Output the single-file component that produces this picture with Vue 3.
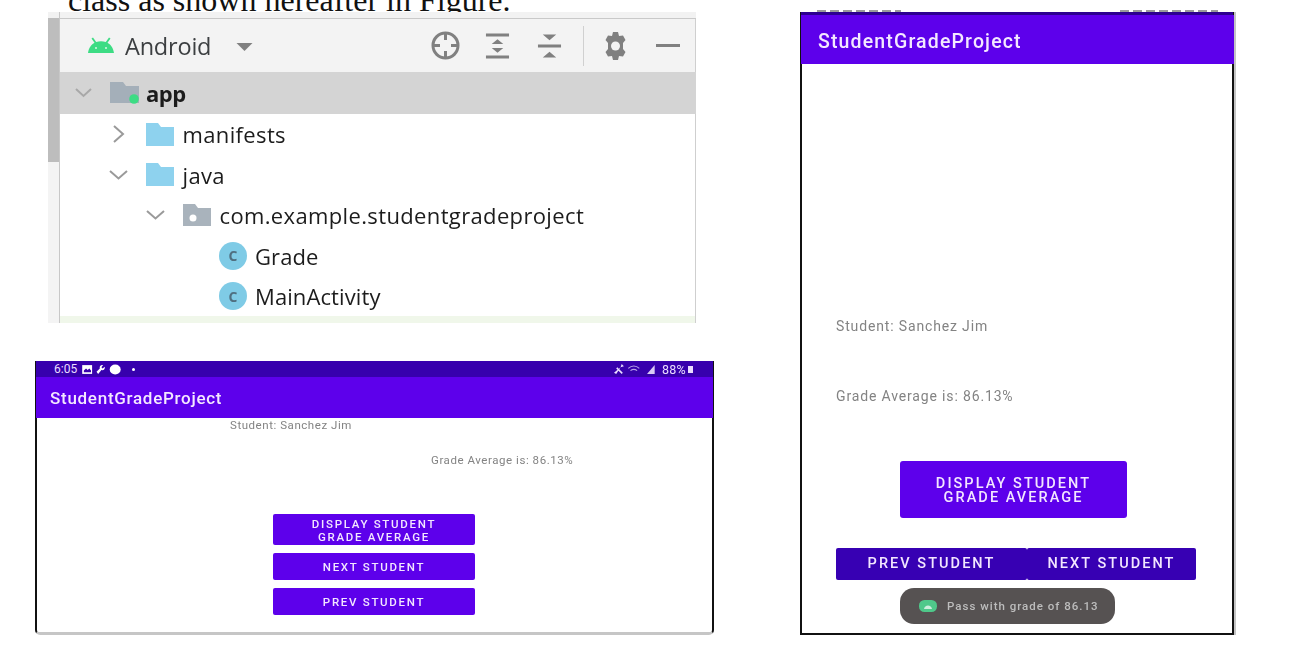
<script setup>
const tree = [
  { name: 'manifests', indent: 52, chev: 'right', icon: 'blue' },
  { name: 'java', indent: 49, chev: 'down', icon: 'blue' },
  { name: 'com.example.studentgradeproject', indent: 86, chev: 'down', icon: 'pkg' },
  { name: 'Grade', indent: 159, chev: '', icon: 'class' },
  { name: 'MainActivity', indent: 159, chev: '', icon: 'class' }
]
</script>

<template>
  <div class="page">
    <div class="left">
      <div class="caption"><span>class as shown hereafter in Figure.</span></div>

      <section class="ide">
        <div class="gutter"></div>
        <div class="panel">
          <div class="strip"></div>
          <header class="tool">
            <svg class="droid" width="26" height="17" viewBox="0 0 26 17">
              <path fill="#3ddc84" d="M0 16C.8 10.500 3.500 7.500 6.500 5.800L3.500 1.400 5 .4l3.200 4.700c3.100-1.200 6.500-1.200 9.600 0L21 .4l1.500 1-3 4.400c3 1.700 5.700 4.700 6.500 10.200z"/>
              <circle cx="8" cy="11" r="1" fill="#d8f7e6"/><circle cx="18" cy="11" r="1" fill="#d8f7e6"/>
            </svg>
            <span class="tool-name">Android</span>
            <svg class="caret" width="17" height="8" viewBox="0 0 16 8"><path fill="#808080" d="M0 0h16L8 8z"/></svg>
            <div class="tool-icons">
              <svg class="i-cross" width="29" height="29" viewBox="0 0 29 29" fill="none" stroke="#808080" stroke-width="3">
                <circle cx="14.500" cy="14.500" r="12.500"/><path d="M14.500 2v7M14.500 20v7M2 14.500h7M20 14.500h7"/>
              </svg>
              <svg class="i-exp" width="25" height="28" viewBox="0 0 26 28" fill="#808080">
                <path d="M1 1h24v3H1zM1 24h24v3H1zM13 7l6 5H7zM13 21l-6-5h12z"/>
              </svg>
              <svg class="i-col" width="25" height="26" viewBox="0 0 26 26" fill="#808080">
                <path d="M6 1h14l-7 6zM1 11.500h24v3H1zM13 19l7 6H6z"/>
              </svg>
              <i class="sep"></i>
              <svg class="i-gear" width="25" height="28" viewBox="0 0 25 28">
                <path fill="#808080" d="M10 0h5l1 4 4-.500 2.500 4.500-2.500 3 0 6 2.500 3-2.500 4.500-4-.500-1 4h-5l-1-4-4 .500L2.500 20l2.500-3 0-6-2.500-3L5 3.500l4 .500z"/>
                <circle cx="12.500" cy="14" r="4.500" fill="#f3f3f3"/>
              </svg>
              <svg class="i-min" width="24" height="4" viewBox="0 0 24 4"><path fill="#808080" d="M0 0h24v3H0z"/></svg>
            </div>
          </header>
          <div class="row selected">
            <svg class="chev d" width="17" height="10" viewBox="0 0 17 10" fill="none" stroke="#a8a8a8" stroke-width="2"><path d="M1 1l7.500 7L16 1"/></svg>
            <svg class="folder" width="29" height="22" viewBox="0 0 29 22">
              <path fill="#a4afb9" d="M0 0h13l3 4h13v17H0z"/><circle cx="24" cy="17" r="4.800" fill="#3ddc84"/>
            </svg>
            <b class="app-name">app</b>
          </div>
          <div v-for="t in tree" :key="t.name" class="row" :style="{ paddingLeft: t.indent + 'px' }">
            <svg v-if="t.chev === 'right'" class="chev r" width="14" height="20" viewBox="0 0 14 20" fill="none" stroke="#9a9a9a" stroke-width="2"><path d="M2 2l9 8-9 8"/></svg>
            <svg v-else-if="t.chev === 'down'" class="chev d" width="19" height="10" viewBox="0 0 19 10" fill="none" stroke="#9a9a9a" stroke-width="2"><path d="M1 1l8.500 7.500L18 1"/></svg>
            <svg v-if="t.icon === 'blue'" class="folder" width="28" height="23" viewBox="0 0 28 23"><path fill="#8ed2ee" d="M0 0h12l3 4h13v19H0z"/></svg>
            <svg v-else-if="t.icon === 'pkg'" class="folder" width="28" height="23" viewBox="0 0 28 23">
              <path fill="#a9b3bc" d="M0 0h12l3 4h13v18H0z"/><circle cx="10" cy="14" r="3.500" fill="#fff"/>
            </svg>
            <span v-else class="cls">C</span>
            <span class="row-name" :class="{ tight: t.icon === 'class' }">{{ t.name }}</span>
          </div>
          <div class="tint"></div>
        </div>
      </section>

      <section class="land">
        <div class="land-status">
          <span class="clock">6:05</span>
          <svg width="42" height="11" viewBox="0 0 36 10" fill="#fff">
            <path d="M0 1h9v8H0z"/><path fill="#3a00ad" d="M1.500 6l2-2 1.500 1.500L6.500 4l1.500 2v1.500h-6.500z"/>
            <path d="M13 7l3-3c-.5-2 1-3.500 3-3l-1.500 2 1 1 2-1.500c.5 2-1 3.500-3 3l-3 3.500z"/>
            <ellipse cx="30" cy="5" rx="5" ry="4.500"/>
          </svg>
          <i class="dot"></i>
          <span class="spring"></span>
          <svg width="44" height="11" viewBox="0 0 40 10" fill="#eadcff">
            <path d="M0 8l6-5 1-3 2 2-3 1-4 6zM3 3l5 5-1 1-5-5z"/>
            <path fill="none" stroke="#b9a2e8" d="M13 4c3-3 7-3 10 0M15 6c2-1.500 4-1.500 6 0"/>
            <path fill="#d9c9f5" d="M30 9l7-8v8z"/>
          </svg>
          <span class="batt">88%</span>
          <i class="cell"></i>
        </div>
        <div class="land-bar">StudentGradeProject</div>
        <div class="land-body">
          <p class="ln-student">Student: Sanchez Jim</p>
          <p class="ln-grade">Grade Average is: 86.13%</p>
          <div class="land-btns">
            <button class="btn b1">DISPLAY STUDENT<br>GRADE AVERAGE</button>
            <button class="btn b2">NEXT STUDENT</button>
            <button class="btn b3">PREV STUDENT</button>
          </div>
        </div>
      </section>
    </div>

    <div class="right">
      <div class="frag"><i class="f1"></i><i class="f2"></i></div>
      <section class="port">
        <div class="port-status"></div>
        <div class="port-bar">StudentGradeProject</div>
        <div class="port-body">
          <p class="pt-student">Student: Sanchez Jim</p>
          <p class="pt-grade">Grade Average is: 86.13%</p>
          <button class="pbtn main">DISPLAY STUDENT<br>GRADE AVERAGE</button>
          <div class="pair">
            <button class="pbtn prev">PREV STUDENT</button>
            <button class="pbtn next">NEXT STUDENT</button>
          </div>
          <div class="toast">
            <svg width="18" height="12" viewBox="0 0 18 12">
              <rect width="18" height="12" rx="5.500" fill="#4fc88a"/>
              <path fill="#cdeedd" d="M5 9c.3-2 2-3.500 4-3.500s3.700 1.500 4 3.500z"/>
            </svg>
            <span>Pass with grade of 86.13</span>
          </div>
        </div>
      </section>
    </div>
  </div>
</template>

<style>
html, body { margin: 0; background: #fff; }
</style>

<style scoped>
.page {
  width: 1309px; height: 652px; overflow: hidden; background: #fff;
  display: flex; align-items: flex-start;
}
.left { width: 800px; flex: none; }
.caption {
  height: 12px; overflow: hidden; display: flex; align-items: flex-end;
  padding-left: 68px;
  font: 32px/24px "Liberation Serif", serif; color: #111; white-space: nowrap;
}
.caption span { display: block; }

.ide { margin-left: 48px; width: 648px; height: 311px; display: flex; background: #fff; overflow: hidden; filter: blur(.3px); }
.gutter { width: 11px; flex: none; background: linear-gradient(#f2f2f2 0 6px, #bdbdbd 6px 150px, #f4f4f4 150px); }
.panel { flex: 1; display: flex; flex-direction: column; border-left: 1px solid #c8c8c8; border-right: 1px solid #cfcfcf; }
.strip { height: 6px; background: #f2f2f2; border-bottom: 1px solid #c9c9c9; margin-right: -1px; }
.tool { height: 53px; background: #f3f3f3; display: flex; align-items: center; padding-left: 28px; flex: none; }
.tool-name { font: 23.500px "Open Sans", sans-serif; color: #3c3f41; margin-left: 11px; letter-spacing: -.2px; }
.caret { margin-left: 25px; margin-top: 3px; }
.tool-icons { margin-left: auto; padding-right: 15px; display: flex; align-items: center; }
.i-exp { margin-left: 25px; }
.i-col { margin-left: 27px; }
.sep { width: 1px; height: 40px; background: #d0d0d0; margin-left: 21px; }
.i-gear { margin-left: 19px; }
.i-min { margin-left: 28px; }

.row { height: 40.500px; display: flex; align-items: center; flex: none; box-sizing: border-box; }
.selected { height: 42px; background: #d4d4d4; padding-left: 15px; margin-right: -1px; }
.chev { flex: none; }
.chev.d { margin-right: 18px; }
.chev.r { margin-right: 20px; }
.row-name { font: 22px "Open Sans", sans-serif; color: #1c1c1c; margin-left: 8.500px; white-space: nowrap; letter-spacing: .36px; }
.row-name.tight { margin-left: 8px; letter-spacing: .1px; }
.app-name { font: 700 22px "Open Sans", sans-serif; color: #1c1c1c; margin-left: 7px; letter-spacing: -.5px; }
.cls {
  width: 28px; height: 28px; border-radius: 50%; background: #7fcbe6; color: #4f6f80; flex: none;
  display: grid; place-items: center; font: 700 14px "Open Sans", sans-serif;
}
.tint { flex: 1; background: #f0f7ea; margin-top: -1px; }

.land {
  margin: 38px 0 0 35px; width: 679px; height: 274px; box-sizing: border-box;
  display: flex; flex-direction: column; background: #fff; filter: blur(.35px);
  border: solid #111; border-width: 0 2px 0 2px; border-bottom: 3px solid #c6c6c6; border-radius: 0 0 5px 5px;
}
.land-status {
  height: 16px; flex: none; background: #3700ad; display: flex; align-items: center; margin: 0 -1px;
  padding: 0 20px 0 18px; color: #eadcff; font: 12px Roboto, sans-serif; gap: 4px;
}
.dot { width: 3px; height: 3px; background: #fff; border-radius: 50%; margin-left: 5px; }
.spring { flex: 1; }
.batt { font-size: 12.500px; letter-spacing: .3px; }
.cell { width: 5px; height: 7px; background: #eadcff; margin-left: -2px; }
.land-bar {
  height: 41px; flex: none; background: #5d00eb; color: #f4e8ff; margin: 0 -1px; padding-left: 14px;
  display: flex; align-items: center; font: 500 17px Roboto, sans-serif; letter-spacing: .72px;
}
.land-body { flex: 1; font: 11.500px Roboto, sans-serif; color: #838383; }
.land-body p { margin: 0; line-height: 14px; letter-spacing: .55px; }
.ln-student { padding-left: 193px; }
.ln-grade { padding-left: 394px; margin-top: 21px !important; }
.land-btns { margin: 47px 0 0 236px; width: 202px; display: flex; flex-direction: column; gap: 8px; }
.btn {
  border: 0; border-radius: 2px; background: #5d00eb; color: #f3e6ff; padding: 2px 0 0;
  font: 500 11.500px/12.500px Roboto, sans-serif; letter-spacing: 1.700px;
}
.b1 { height: 31px; }
.b2 { height: 27px; }
.b3 { height: 27px; }

.right { margin-top: 10px; }
.frag { height: 2px; position: relative; }
.frag i { position: absolute; top: 0; height: 2px; background: repeating-linear-gradient(90deg, #9a9a9a 0 9px, transparent 9px 13px); }
.f1 { left: 17px; width: 84px; }
.f2 { left: 320px; width: 98px; }
.port {
  width: 434px; height: 623px; flex: none; box-sizing: border-box;
  display: flex; flex-direction: column; background: #fff; filter: blur(.35px);
  border: solid #111; border-width: 0 2px 2px 2px; box-shadow: 2px 0 0 #c4c4c4;
}
.port-status { height: 3px; background: #2c0090; margin: 0 -1px; flex: none; }
.port-bar {
  height: 49px; box-sizing: border-box; background: #5d00eb; color: #f4e8ff; margin: 0 -2px 0 -1px; flex: none; padding: 3px 0 0 17px;
  display: flex; align-items: center; font: 500 19.500px Roboto, sans-serif; letter-spacing: 1.150px;
}
.port-body { flex: 1; display: flex; flex-direction: column; font: 14px Roboto, sans-serif; color: #838383; }
.port-body p { margin: 0; line-height: 16px; padding-left: 34px; letter-spacing: .85px; }
.pt-student { margin-top: 254px !important; }
.pt-grade { margin-top: 54px !important; }
.pbtn {
  border: 0; padding: 0; color: #f3e6ff; font: 500 14.500px/14.500px Roboto, sans-serif; letter-spacing: 2.050px;
}
.main { margin: 57px 0 0 98px; width: 227px; height: 57px; background: #5d00eb; border-radius: 3px; padding-top: 3px; }
.pair { margin: 30px 0 0 34px; display: flex; }
.prev, .next { background: #3700b3; height: 32px; border-radius: 2px; }
.prev { width: 191px; }
.next { width: 169px; }
.toast {
  margin: 8px 0 0 98px; width: 215px; height: 36px; border-radius: 14px; background: #565252; color: #bdbdbd;
  display: flex; align-items: center; padding-left: 19px; box-sizing: border-box; gap: 10px;
  font: 500 11.500px Roboto, sans-serif; letter-spacing: 1px;
}
</style>
